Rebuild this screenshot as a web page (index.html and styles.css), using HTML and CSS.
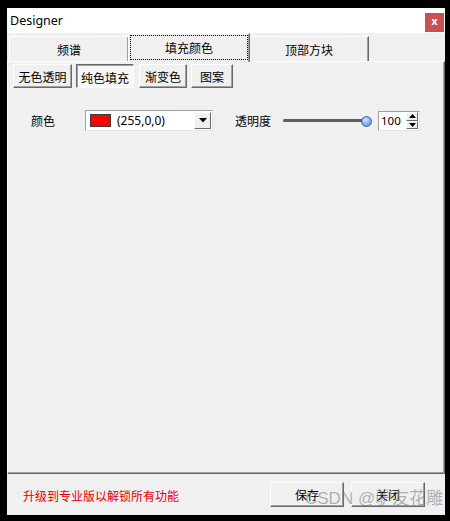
FILE: index.html
```html
<!DOCTYPE html>
<html>
<head>
<meta charset="utf-8">
<link rel="stylesheet" href="styles.css">
</head>
<body>
<div class="window">
  <div class="titlebar">
    <span class="title">Designer</span>
    <span class="close">x</span>
  </div>
  <div class="tabs">
    <div class="tab t1">频谱</div>
    <div class="tab active"><span class="focus">填充颜色</span></div>
    <div class="tab t3">顶部方块</div>
  </div>
  <div class="panel">
    <div class="subtabs">
      <div class="btn b1">无色透明</div>
      <div class="btn b2 pressed">纯色填充</div>
      <div class="btn b3">渐变色</div>
      <div class="btn b4">图案</div>
    </div>
    <div class="row">
      <span class="label color-label">颜色</span>
      <div class="combo">
        <span class="swatch"></span>
        <span class="combo-text">(255,0,0)</span>
        <span class="drop">
          <svg width="8" height="5" viewBox="0 0 8 5"><path d="M0 0H8L4 4.5Z" fill="#000"/></svg>
        </span>
      </div>
      <span class="label alpha-label">透明度</span>
      <div class="slider">
        <span class="track"></span>
        <span class="thumb"></span>
      </div>
      <div class="spin">
        <span class="spin-text">100</span>
        <span class="spin-btns">
          <span class="arrow"><svg width="7" height="4" viewBox="0 0 7 4"><path d="M3.5 0L7 4H0Z" fill="#000"/></svg></span>
          <span class="arrow"><svg width="7" height="4" viewBox="0 0 7 4"><path d="M0 0H7L3.5 4Z" fill="#000"/></svg></span>
        </span>
      </div>
    </div>
  </div>
  <div class="footer">
    <span class="upgrade">升级到专业版以解锁所有功能</span>
    <div class="actions">
      <div class="fbtn">保存</div>
      <div class="fbtn">关闭</div>
    </div>
    <span class="watermark">CSDN @驴友花雕</span>
  </div>
</div>
</body>
</html>
```

FILE: styles.css
```css
html, body {
  margin: 0;
  padding: 0;
  background: #000;
}
body {
  width: 450px;
  height: 521px;
  overflow: hidden;
  font-family: "Noto Sans CJK SC", "Noto Sans", sans-serif;
  font-size: 12px;
  color: #000;
}
.window {
  position: relative;
  margin: 8px 0 0 7px;
  width: 438px;
  height: 507px;
  background: #f0f0f0;
  display: flex;
  flex-direction: column;
}
.titlebar {
  height: 25px;
  background: #fff;
  display: flex;
  align-items: center;
  justify-content: space-between;
  flex: none;
}
.title {
  font-family: "Noto Sans", "Open Sans", sans-serif;
  font-size: 12.5px;
  padding-left: 3px;
  margin-top: -1px;
}
.close {
  width: 19px;
  height: 19px;
  margin-right: 1px;
  margin-top: 3px;
  background: #c75050;
  color: #fff;
  font-family: "DejaVu Sans", sans-serif;
  font-weight: bold;
  font-size: 10px;
  display: flex;
  align-items: center;
  justify-content: center;
  line-height: 1;
}
.tabs {
  height: 28px;
  flex: none;
  display: flex;
  align-items: flex-start;
  padding-left: 2px;
}
.tab {
  box-sizing: border-box;
  width: 120px;
  height: 25px;
  margin-top: 3px;
  border-top: 1px solid #fff;
  border-left: 1px solid #fff;
  border-right: 1px solid #696969;
  box-shadow: inset -1px 0 0 #a0a0a0;
  display: flex;
  align-items: center;
  justify-content: center;
  padding-top: 1px;
}
.tab.t3 {
  width: 120px;
}
.tab.active {
  position: relative;
  z-index: 1;
  width: 122px;
  height: 29px;
  margin: 0 -1px -1px -1px;
  background: #f0f0f0;
  padding: 1px 1px 2px 1px;
  align-items: stretch;
}
.focus {
  flex: 1;
  border: 1px dotted #000;
  display: flex;
  align-items: center;
  justify-content: center;
}
.panel {
  flex: 1;
  box-sizing: border-box;
  border-top: 1px solid #fff;
  border-left: 1px solid #fff;
  border-right: 1px solid #696969;
  border-bottom: 1px solid #696969;
  box-shadow: inset -1px -1px 0 #a0a0a0;
  padding: 2px 0 0 5px;
}
.subtabs {
  display: flex;
  gap: 4px;
  height: 24px;
}
.btn {
  box-sizing: border-box;
  height: 24px;
  border-top: 1px solid #fff;
  border-left: 1px solid #fff;
  border-right: 1px solid #696969;
  border-bottom: 1px solid #696969;
  box-shadow: inset -1px -1px 0 #a0a0a0;
  display: flex;
  align-items: center;
  justify-content: center;
  font-size: 12px;
  background: #f0f0f0;
}
.b1 { width: 59px; }
.b2 { width: 58px; }
.b3 { width: 48px; margin-left: 1px; }
.b4 { width: 42px; }
.btn.pressed {
  border-top: 1px solid #696969;
  border-left: 1px solid #696969;
  border-right: 1px solid #fff;
  border-bottom: 1px solid #fff;
  box-shadow: inset 1px 1px 0 #a0a0a0;
  background: #f7f7f7;
  padding-top: 2px;
}
.row {
  margin-top: 22px;
  display: flex;
  align-items: center;
  height: 21px;
}
.label {
  font-size: 12px;
}
.color-label {
  margin-left: 18px;
  width: 54px;
}
.combo {
  box-sizing: border-box;
  width: 128px;
  height: 21px;
  background: #fff;
  border-top: 1px solid #a0a0a0;
  border-left: 1px solid #a0a0a0;
  border-right: 1px solid #e3e3e3;
  border-bottom: 1px solid #e3e3e3;
  display: flex;
  align-items: center;
  padding-left: 4px;
}
.swatch {
  box-sizing: border-box;
  width: 21px;
  height: 13px;
  background: #f00;
  border: 1px solid #3c3c3c;
}
.combo-text {
  margin-left: 6px;
  flex: 1;
  font-family: "Noto Sans", "Open Sans", sans-serif;
  font-size: 12px;
}
.drop {
  box-sizing: border-box;
  width: 17px;
  height: 17px;
  margin-right: 1px;
  background: #f0f0f0;
  border-top: 1px solid #fff;
  border-left: 1px solid #fff;
  border-right: 1px solid #696969;
  border-bottom: 1px solid #696969;
  display: flex;
  align-items: center;
  justify-content: center;
}
.alpha-label {
  margin-left: 22px;
  width: 48px;
}
.slider {
  position: relative;
  width: 89px;
  height: 12px;
  display: flex;
  align-items: center;
}
.track {
  display: block;
  width: 84px;
  height: 3px;
  border-radius: 2px;
  background: #5e5e5e;
}
.thumb {
  position: absolute;
  left: 78px;
  top: 1px;
  width: 9px;
  height: 9px;
  border-radius: 50%;
  border: 1px solid #3a62a8;
  background: radial-gradient(circle at 40% 35%, #dbe9ff 0%, #8db6f0 45%, #4a86d8 100%);
}
.spin {
  box-sizing: border-box;
  margin-left: 6px;
  width: 42px;
  height: 20px;
  background: #fff;
  border-top: 1px solid #a0a0a0;
  border-left: 1px solid #a0a0a0;
  border-right: 1px solid #e3e3e3;
  border-bottom: 1px solid #e3e3e3;
  display: flex;
  align-items: center;
  padding-left: 2px;
}
.spin-text {
  flex: 1;
  font-family: "Noto Sans", "Open Sans", sans-serif;
  font-size: 11.5px;
}
.spin-btns {
  display: flex;
  flex-direction: column;
  width: 12px;
  height: 17px;
  margin-right: 1px;
}
.arrow {
  flex: 1;
  box-sizing: border-box;
  background: #f0f0f0;
  border-top: 1px solid #fff;
  border-left: 1px solid #fff;
  border-right: 1px solid #696969;
  border-bottom: 1px solid #696969;
  display: flex;
  align-items: center;
  justify-content: center;
}
.footer {
  height: 41px;
  flex: none;
  box-sizing: border-box;
  display: flex;
  align-items: center;
  justify-content: space-between;
  padding: 0 20px 0 16px;
}
.upgrade {
  color: #e00000;
  font-size: 12px;
  margin-top: 2px;
}
.actions {
  display: flex;
  gap: 7px;
}
.fbtn {
  box-sizing: border-box;
  width: 74px;
  height: 25px;
  background: #f0f0f0;
  border-top: 1px solid #fff;
  border-left: 1px solid #fff;
  border-right: 1px solid #696969;
  border-bottom: 1px solid #696969;
  box-shadow: inset -1px -1px 0 #a0a0a0;
  display: flex;
  align-items: center;
  justify-content: center;
  font-size: 12px;
}
.watermark {
  position: absolute;
  left: 298px;
  bottom: 6px;
  font-family: "Liberation Sans", "Noto Sans CJK SC", sans-serif;
  font-size: 17px;
  color: rgba(120, 120, 120, 0.55);
  white-space: nowrap;
  pointer-events: none;
}
```
